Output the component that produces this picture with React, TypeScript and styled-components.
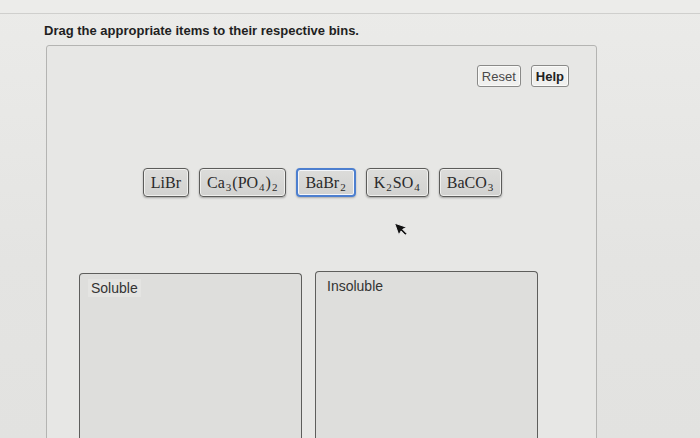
import React from 'react';
import styled, { createGlobalStyle } from 'styled-components';

const GlobalStyle = createGlobalStyle`
  html, body {
    margin: 0;
    padding: 0;
    background: #e6e6e4;
    overflow: hidden;
  }
  body {
    font-family: "Liberation Sans", Arial, sans-serif;
  }
`;

const Page = styled.div`
  width: 700px;
  height: 438px;
  overflow: hidden;
  background: linear-gradient(180deg, #ebebe9 0%, #e4e4e2 60%, #e2e2e0 100%);
`;

const TopStrip = styled.div`
  height: 13px;
  background: #ececea;
  border-bottom: 1px solid #cfcfcd;
`;

const Title = styled.h1`
  margin: 9px 0 0 44px;
  font-size: 13px;
  font-weight: 700;
  color: #1f1f1f;
  line-height: 16px;
`;

const Panel = styled.div`
  position: relative;
  margin: 6px 0 0 46px;
  width: 551px;
  height: 420px;
  box-sizing: border-box;
  border: 1px solid #b4b4b2;
  border-radius: 3px;
  background: #e7e7e5;
  padding: 19px 27px 0 32px;
`;

const Toolbar = styled.div`
  display: flex;
  justify-content: flex-end;
  gap: 10px;
`;

const ToolButton = styled.button<{ $bold?: boolean }>`
  height: 22px;
  padding: 0 4px;
  font-family: "Liberation Sans", Arial, sans-serif;
  font-size: 13px;
  font-weight: ${p => (p.$bold ? 700 : 400)};
  color: ${p => (p.$bold ? '#222' : '#4a4a4a')};
  background: #f0f0ee;
  border: 1px solid #8a8a88;
  border-radius: 3px;
  box-shadow: inset 0 0 0 1px #fafaf8;
`;

const ItemRow = styled.div`
  display: flex;
  justify-content: center;
  gap: 10px;
  margin-top: 81px;
  padding-right: 3px;
`;

const Item = styled.div<{ $selected?: boolean }>`
  height: 29px;
  display: flex;
  align-items: center;
  padding: 0 7px;
  box-sizing: border-box;
  font-family: "Liberation Serif", "Times New Roman", serif;
  font-size: 16px;
  color: #2a2a2a;
  background: linear-gradient(180deg, #dcdcda 0%, #d2d2d0 100%);
  border: ${p => (p.$selected ? '2px solid #4d7fcf' : '1px solid #5c5c5a')};
  border-radius: 4px;
  box-shadow: ${p =>
    p.$selected
      ? 'inset 0 0 0 1px #f4f6fa, 0 1px 2px rgba(0,0,0,0.25)'
      : 'inset 0 0 0 1px #efefed, 0 1px 2px rgba(0,0,0,0.3)'};

  sub {
    font-size: 11px;
    position: relative;
    top: 4px;
    vertical-align: baseline;
    line-height: 0;
    margin: 0 1px;
  }
`;

const BinRow = styled.div`
  display: flex;
  gap: 13px;
  margin-top: 74px;
`;

const Bin = styled.div<{ $offset?: number }>`
  width: 223px;
  height: 200px;
  box-sizing: border-box;
  margin-top: ${p => p.$offset ?? 0}px;
  border: 1.5px solid #5e5e5c;
  border-bottom: none;
  border-radius: 4px 4px 0 0;
  background: #dededc;
  padding: 5px 8px;
`;

const BinLabel = styled.span<{ $plain?: boolean }>`
  display: inline-block;
  padding: 1px 3px;
  font-size: 14px;
  color: #333;
  background: ${p => (p.$plain ? 'transparent' : '#e4e4e2')};
`;

const Cursor = styled.svg`
  position: absolute;
  left: 348px;
  top: 174px;
`;

const Formula = ({ parts }: { parts: [string, string?][] }) => (
  <>
    {parts.map(([t, s], i) => (
      <React.Fragment key={i}>
        {t}
        {s && <sub>{s}</sub>}
      </React.Fragment>
    ))}
  </>
);

const App = () => {
  return (
    <>
      <GlobalStyle />
      <Page>
        <TopStrip />
        <Title>Drag the appropriate items to their respective bins.</Title>
        <Panel>
          <Toolbar>
            <ToolButton>Reset</ToolButton>
            <ToolButton $bold>Help</ToolButton>
          </Toolbar>
          <ItemRow>
            <Item>LiBr</Item>
            <Item>
              <Formula parts={[['Ca', '3'], ['(PO', '4'], [')', '2']]} />
            </Item>
            <Item $selected>
              <Formula parts={[['BaBr', '2']]} />
            </Item>
            <Item>
              <Formula parts={[['K', '2'], ['SO', '4']]} />
            </Item>
            <Item>
              <Formula parts={[['BaCO', '3']]} />
            </Item>
          </ItemRow>
          <BinRow>
            <Bin $offset={2}>
              <BinLabel>Soluble</BinLabel>
            </Bin>
            <Bin>
              <BinLabel $plain>Insoluble</BinLabel>
            </Bin>
          </BinRow>
          <Cursor width="14" height="18" viewBox="0 0 14 18">
            <path
              d="M2 1 L12 9 L7.5 9.5 L10 15 L8 16 L5.5 10.5 L2 13.5 Z"
              fill="#111"
              stroke="#f4f4f4"
              strokeWidth="0.8"
              transform="rotate(-20 7 9)"
            />
          </Cursor>
        </Panel>
      </Page>
    </>
  );
};

export default App;
